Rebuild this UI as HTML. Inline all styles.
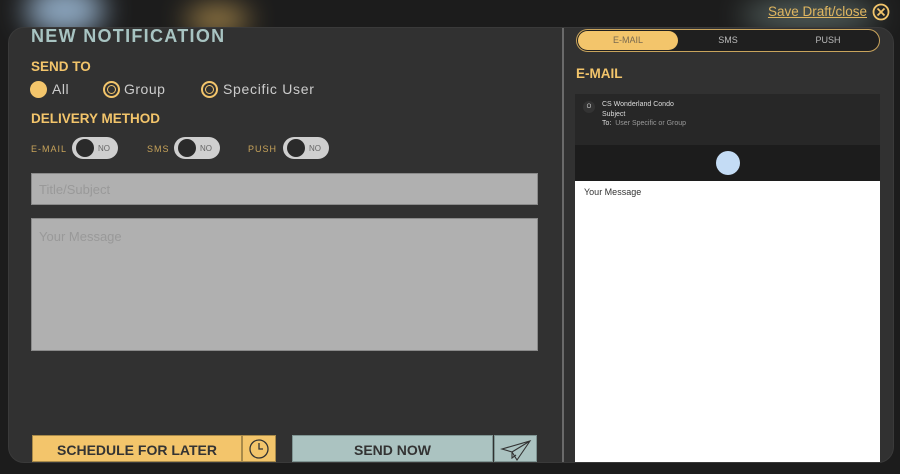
<!DOCTYPE html>
<html><head><style>
*{margin:0;padding:0;box-sizing:border-box}
body{width:900px;height:474px;overflow:hidden;background:#1c1c1c;font-family:"Liberation Sans",sans-serif;position:relative}
.blob{position:absolute;border-radius:50%;filter:blur(14px)}
.panel{position:absolute;left:8px;top:27px;width:886px;height:436px;background:#313131;border-radius:16px;border:1px solid #3a3a3a}
.abs{position:absolute}
.y{color:#f3c56b;font-weight:bold}
.radio{position:absolute;width:17px;height:17px;border-radius:50%;border:2px solid #f3c56b}
.radio i{position:absolute;left:2px;top:2px;width:9px;height:9px;border-radius:50%;border:1px solid #f3c56b}
.tog{position:absolute;width:46px;height:22px;border-radius:11px;background:#cfcfcf}
.tog b{position:absolute;left:4px;top:2px;width:18px;height:18px;border-radius:50%;background:#2a2a2a}
.tog span{position:absolute;right:8px;top:7px;font-size:8px;color:#666}
.lbl{position:absolute;font-size:9px;color:#c7a35a;letter-spacing:1px}
</style></head><body>
<div class="blob" style="left:25px;top:-15px;width:80px;height:50px;background:#a9c9e8;opacity:.8"></div>
<div class="blob" style="left:185px;top:8px;width:65px;height:22px;background:#e6b860;opacity:.8"></div>
<div class="blob" style="left:740px;top:0px;width:140px;height:30px;background:#8ea9a4;opacity:.5"></div>
<div class="panel"></div>
<div class="abs" style="left:562px;top:28px;width:2px;height:434px;background:#6a6a6a"></div>
<div class="abs" style="left:31px;top:26px;font-size:18px;font-weight:bold;color:#a8c4c2;letter-spacing:1.3px">NEW NOTIFICATION</div>
<div class="abs y" style="left:31px;top:59px;font-size:13.5px">SEND TO</div>
<div class="radio" style="left:30px;top:81px;background:#f3c56b"></div>
<div class="abs" style="left:52px;top:81px;font-size:14px;color:#ccc;letter-spacing:.5px">All</div>
<div class="radio" style="left:103px;top:81px"><i></i></div>
<div class="abs" style="left:124px;top:81px;font-size:14px;color:#ccc;letter-spacing:.5px">Group</div>
<div class="radio" style="left:201px;top:81px"><i></i></div>
<div class="abs" style="left:223px;top:81px;font-size:14px;color:#ccc;letter-spacing:.7px">Specific User</div>
<div class="abs y" style="left:31px;top:111px;font-size:13.5px">DELIVERY METHOD</div>
<div class="lbl" style="left:31px;top:144px">E-MAIL</div><div class="tog" style="left:72px;top:137px"><b></b><span>NO</span></div>
<div class="lbl" style="left:147px;top:144px">SMS</div><div class="tog" style="left:174px;top:137px"><b></b><span>NO</span></div>
<div class="lbl" style="left:248px;top:144px">PUSH</div><div class="tog" style="left:283px;top:137px"><b></b><span>NO</span></div>
<div class="abs" style="left:31px;top:173px;width:507px;height:32px;background:#b0b0b0;border:1px solid #8a8a8a;color:#999;font-size:13px;padding:8px 7px">Title/Subject</div>
<div class="abs" style="left:31px;top:218px;width:507px;height:133px;background:#b0b0b0;border:1px solid #8a8a8a;color:#999;font-size:13px;padding:10px 7px">Your Message</div>
<div class="abs" style="left:32px;top:435px;width:210px;height:27px;background:#f3c56b;border:1px solid #a88a4a;font-weight:bold;font-size:14px;color:#333;text-align:center;line-height:28px">SCHEDULE FOR LATER</div>
<div class="abs" style="left:242px;top:435px;width:34px;height:27px;background:#f3c56b;border:1px solid #a88a4a">
<svg width="32" height="25" viewBox="0 0 32 25"><circle cx="16" cy="13" r="9" fill="none" stroke="#333" stroke-width="1.3"/><path d="M16 7v6h4" fill="none" stroke="#333" stroke-width="1.3"/></svg></div>
<div class="abs" style="left:292px;top:435px;width:201px;height:27px;background:#abc3c1;border:1px solid #7f9593;font-weight:bold;font-size:14px;color:#333;text-align:center;line-height:28px">SEND NOW</div>
<div class="abs" style="left:494px;top:435px;width:43px;height:27px;background:#abc3c1;border:1px solid #7f9593">
<svg width="41" height="25" viewBox="0 0 41 25"><path d="M7 13L35 5L22 24L17 16ZM17 16L35 5M17 16L17 22L21 19" fill="none" stroke="#333" stroke-width="1.1"/></svg></div>
<div class="abs" style="right:33px;top:4px;font-size:13.5px;color:#e0b660;text-decoration:underline">Save Draft/close</div>
<svg class="abs" style="left:872px;top:3px" width="18" height="18" viewBox="0 0 18 18"><circle cx="9" cy="9" r="7.5" fill="none" stroke="#f3c56b" stroke-width="1.8"/><path d="M5.5 5.5l7 7M12.5 5.5l-7 7" stroke="#f3c56b" stroke-width="1.8"/></svg>
<div class="abs" style="left:576px;top:29px;width:304px;height:23px;border:1px solid #c9a45c;border-radius:12px;background:#1f1f1f"></div>
<div class="abs" style="left:578px;top:31px;width:100px;height:19px;border-radius:10px;background:#f3c56b"></div>
<div class="abs" style="left:578px;top:35px;width:100px;text-align:center;font-size:9px;color:#7a6a50">E-MAIL</div>
<div class="abs" style="left:678px;top:35px;width:100px;text-align:center;font-size:9px;color:#bbb">SMS</div>
<div class="abs" style="left:778px;top:35px;width:100px;text-align:center;font-size:9px;color:#bbb">PUSH</div>
<div class="abs y" style="left:576px;top:66px;font-size:13.5px">E-MAIL</div>
<div class="abs" style="left:575px;top:94px;width:305px;height:51px;background:#272727"></div>
<div class="abs" style="left:583px;top:101px;width:12px;height:12px;border-radius:50%;background:#333;color:#ccc;font-size:6px;text-align:center;line-height:12px">O</div>
<div class="abs" style="left:602px;top:100px;font-size:7px;color:#ddd;line-height:9.5px">CS Wonderland Condo<br>Subject<br>To: <span style="color:#999">&nbsp;User Specific or Group</span></div>
<div class="abs" style="left:575px;top:145px;width:305px;height:36px;background:#1c1c1c"></div>
<div class="abs" style="left:716px;top:151px;width:24px;height:24px;border-radius:50%;background:#c4dcf5"></div>
<div class="abs" style="left:575px;top:181px;width:305px;height:281px;background:#fff"></div>
<div class="abs" style="left:584px;top:187px;font-size:9px;color:#333">Your Message</div>
</body></html>
